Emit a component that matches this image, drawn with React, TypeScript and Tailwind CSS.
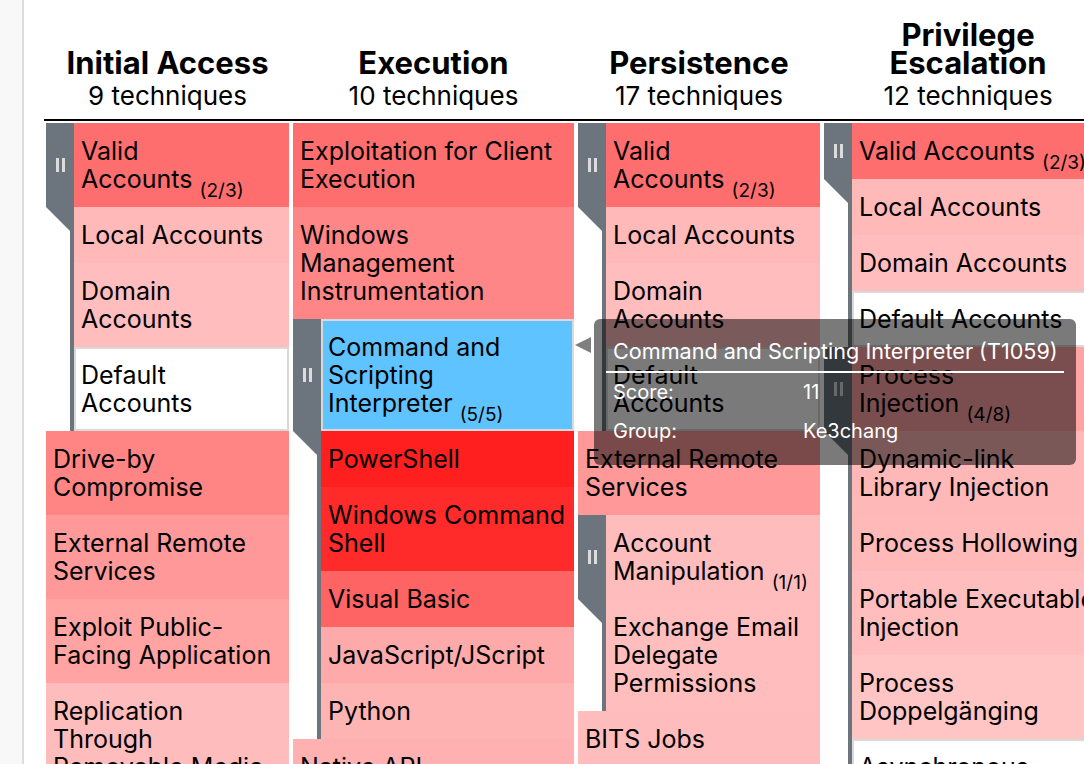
type Tech = {
  lines: string[];
  bg: string;
  count?: string;
  outline?: boolean;
  subs?: Tech[];
};

type Tactic = {
  title: string[];
  techniques: string;
  width: string;
  items: Tech[];
};

const tactics: Tactic[] = [
  {
    title: ['Initial Access'],
    techniques: '9 techniques',
    width: 'w-[247px]',
    items: [
      {
        lines: ['Valid', 'Accounts'],
        count: '(2/3)',
        bg: 'bg-[#ff6e6e]',
        subs: [
          { lines: ['Local Accounts'], bg: 'bg-[#ffb9b9]' },
          { lines: ['Domain', 'Accounts'], bg: 'bg-[#ffbdbd]' },
          { lines: ['Default', 'Accounts'], bg: 'bg-white', outline: true },
        ],
      },
      { lines: ['Drive-by', 'Compromise'], bg: 'bg-[#ff8585]' },
      { lines: ['External Remote', 'Services'], bg: 'bg-[#ff9999]' },
      { lines: ['Exploit Public-', 'Facing Application'], bg: 'bg-[#ffa3a3]' },
      { lines: ['Replication', 'Through', 'Removable Media'], bg: 'bg-[#ffbcbc]' },
    ],
  },
  {
    title: ['Execution'],
    techniques: '10 techniques',
    width: 'w-[285px]',
    items: [
      { lines: ['Exploitation for Client', 'Execution'], bg: 'bg-[#ff6e6e]' },
      { lines: ['Windows', 'Management', 'Instrumentation'], bg: 'bg-[#ff8686]' },
      {
        lines: ['Command and', 'Scripting', 'Interpreter'],
        count: '(5/5)',
        bg: 'bg-[#5fc3ff]',
        outline: true,
        subs: [
          { lines: ['PowerShell'], bg: 'bg-[#ff1f1f]' },
          { lines: ['Windows Command', 'Shell'], bg: 'bg-[#ff2a2a]' },
          { lines: ['Visual Basic'], bg: 'bg-[#ff6464]' },
          { lines: ['JavaScript/JScript'], bg: 'bg-[#ffaaaa]' },
          { lines: ['Python'], bg: 'bg-[#ffb4b4]' },
        ],
      },
      { lines: ['Native API'], bg: 'bg-[#ffb1b1]' },
    ],
  },
  {
    title: ['Persistence'],
    techniques: '17 techniques',
    width: 'w-[246px]',
    items: [
      {
        lines: ['Valid', 'Accounts'],
        count: '(2/3)',
        bg: 'bg-[#ff6e6e]',
        subs: [
          { lines: ['Local Accounts'], bg: 'bg-[#ffb9b9]' },
          { lines: ['Domain', 'Accounts'], bg: 'bg-[#ffbdbd]' },
          { lines: ['Default', 'Accounts'], bg: 'bg-white', outline: true },
        ],
      },
      { lines: ['External Remote', 'Services'], bg: 'bg-[#ff9999]' },
      {
        lines: ['Account', 'Manipulation'],
        count: '(1/1)',
        bg: 'bg-[#ffbcbc]',
        subs: [{ lines: ['Exchange Email', 'Delegate', 'Permissions'], bg: 'bg-[#ffbdbd]' }],
      },
      { lines: ['BITS Jobs'], bg: 'bg-[#ffbcbc]' },
      { lines: ['Boot or Logon', 'Autostart Execution'], bg: 'bg-[#ffc4c4]' },
    ],
  },
  {
    title: ['Privilege', 'Escalation'],
    techniques: '12 techniques',
    width: 'w-[292px]',
    items: [
      {
        lines: ['Valid Accounts'],
        count: '(2/3)',
        bg: 'bg-[#ff6e6e]',
        subs: [
          { lines: ['Local Accounts'], bg: 'bg-[#ffb9b9]' },
          { lines: ['Domain Accounts'], bg: 'bg-[#ffbdbd]' },
          { lines: ['Default Accounts'], bg: 'bg-white', outline: true },
        ],
      },
      {
        lines: ['Process', 'Injection'],
        count: '(4/8)',
        bg: 'bg-[#ffa3a3]',
        subs: [
          { lines: ['Dynamic-link', 'Library Injection'], bg: 'bg-[#ffb8b8]' },
          { lines: ['Process Hollowing'], bg: 'bg-[#ffb9b9]' },
          { lines: ['Portable Executable', 'Injection'], bg: 'bg-[#ffbdbd]' },
          { lines: ['Process', 'Doppelgänging'], bg: 'bg-[#ffc4c4]' },
          { lines: ['Asynchronous', 'Procedure Call'], bg: 'bg-white', outline: true },
        ],
      },
    ],
  },
];

function Cell({ t }: { t: Tech }) {
  return (
    <div
      className={`${t.bg} ${
        t.outline ? 'border-2 border-[#d9d9d9] px-[5px] py-[12px]' : 'px-[7px] py-[14px]'
      } shrink-0 overflow-hidden whitespace-nowrap text-[25px] leading-[28px] text-black`}
    >
      {t.lines.map((line, i) => (
        <div key={i}>
          {line}
          {i === t.lines.length - 1 && t.count && (
            <>
              {' '}
              <span className="relative top-[9px] text-[19px] leading-none">{t.count}</span>
            </>
          )}
        </div>
      ))}
    </div>
  );
}

function Technique({ t }: { t: Tech }) {
  if (!t.subs) return <Cell t={t} />;

  return (
    <div className="grid shrink-0 grid-cols-[28px_1fr]">
      {/* sidebar handle */}
      <div className="flex items-center justify-center gap-[3px] bg-[#6c757d]">
        <span className="h-[14px] w-[3px] bg-[#dcdcdc]" />
        <span className="h-[14px] w-[3px] bg-[#dcdcdc]" />
      </div>
      <Cell t={t} />
      <div className="flex flex-col">
        <svg width="28" height="24" className="block shrink-0">
          <polygon points="0,0 28,0 28,24 24,24" fill="#6c757d" />
        </svg>
        <div className="ml-[24px] w-[4px] flex-1 bg-[#6c757d]" />
      </div>
      <div className="flex flex-col">
        {t.subs.map((s, i) => (
          <Cell key={i} t={s} />
        ))}
      </div>
    </div>
  );
}

export default function App() {
  return (
    <div className="relative flex h-[764px] w-[1084px] items-start overflow-hidden bg-white font-[Inter,sans-serif]">
      <div className="h-full w-[24px] shrink-0 border-r-2 border-[#dddddd] bg-[#f8f8f8]" />

      <div className="flex shrink-0 items-start pl-[20px]">
        {tactics.map((tac) => (
          <div key={tac.techniques} className={`${tac.width} flex shrink-0 flex-col`}>
            <div className="flex h-[121px] shrink-0 flex-col items-center justify-end border-b-2 border-black pb-[8px] text-center text-black">
              {tac.title.map((line) => (
                <div key={line} className="whitespace-nowrap text-[31px] font-bold leading-[28px]">
                  {line}
                </div>
              ))}
              <div className="mt-[4px] whitespace-nowrap text-[26px] leading-[30px]">{tac.techniques}</div>
            </div>
            <div className="mt-[2px] flex shrink-0 flex-col px-[2px]">
              {tac.items.map((t, i) => (
                <Technique key={i} t={t} />
              ))}
            </div>
          </div>
        ))}
      </div>

      {/* tooltip */}
      <div className="absolute left-[575px] top-[337px] h-0 w-0 border-y-[8px] border-r-[16px] border-y-transparent border-r-[rgba(0,0,0,0.5)]" />
      <div className="absolute left-[594px] top-[319px] h-[146px] w-[482px] rounded-[6px] bg-[rgba(0,0,0,0.52)] p-[12px] text-white">
        <div className="whitespace-nowrap border-b-2 border-white px-[7px] py-[7px] text-[21.6px] leading-[26px]">
          Command and Scripting Interpreter (T1059)
        </div>
        <div className="grid grid-cols-[190px_1fr] whitespace-nowrap text-[20px] leading-[25px]">
          <div className="px-[7px] py-[7px]">Score:</div>
          <div className="px-[7px] py-[7px]">11</div>
          <div className="px-[7px] py-[7px]">Group:</div>
          <div className="px-[7px] py-[7px]">Ke3chang</div>
        </div>
      </div>
    </div>
  );
}
